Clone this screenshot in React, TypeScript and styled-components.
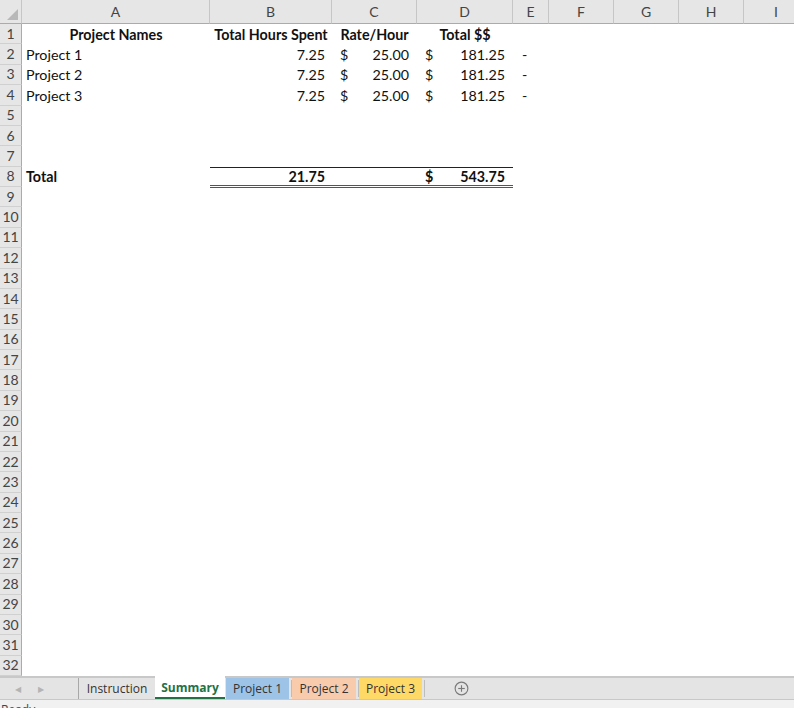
import React from 'react';
import styled, { createGlobalStyle, css } from 'styled-components';

const GlobalStyle = createGlobalStyle`
    html, body {
        margin: 0;
        padding: 0;
        background: #ffffff;
        overflow: hidden;
    }
    body {
        font-family: Lato, "Liberation Sans", sans-serif;
    }
`;

const ROW_H = 20.375;
const COLS = ['A', 'B', 'C', 'D', 'E', 'F', 'G', 'H', 'I'];

const Window = styled.div`
    display: flex;
    flex-direction: column;
    width: 794px;
    height: 708px;
    overflow: hidden;
`;

const Sheet = styled.div`
    display: grid;
    grid-template-columns: 22px 188px 122px 85px 96px 36px 65px 65px 65px 65px;
    grid-template-rows: 24px repeat(32, ${ROW_H}px);
    background: #ffffff;
`;

const Corner = styled.div`
    position: relative;
    background: #e6e6e6;
    border-right: 1px solid #c6c6c6;
    border-bottom: 1px solid #ababab;
    &::after {
        content: '';
        position: absolute;
        right: 3px;
        bottom: 3px;
        width: 0;
        height: 0;
        border-left: 11px solid transparent;
        border-bottom: 11px solid #b8b8b8;
    }
`;

const ColHead = styled.div`
    display: flex;
    align-items: center;
    justify-content: center;
    background: #e6e6e6;
    border-right: 1px solid #c6c6c6;
    border-bottom: 1px solid #ababab;
    color: #444444;
    font-size: 14px;
`;

const RowHead = styled.div`
    display: flex;
    align-items: center;
    justify-content: center;
    background: #e6e6e6;
    border-right: 1px solid #ababab;
    border-bottom: 1px solid #d0d0d0;
    color: #444444;
    font-size: 14px;
    line-height: 1;
`;

const Cell = styled.div<{ $align?: 'left' | 'center' | 'right'; $bold?: boolean; $rules?: boolean }>`
    display: flex;
    align-items: center;
    justify-content: ${({ $align }) =>
        $align === 'center' ? 'center' : $align === 'right' ? 'flex-end' : 'flex-start'};
    padding: 0 4px;
    font-size: 14.3px;
    color: #111111;
    white-space: nowrap;
    font-weight: ${({ $bold }) => ($bold ? 700 : 400)};
    ${({ $rules }) =>
        $rules &&
        css`
            border-top: 1px solid #222222;
            border-bottom: 3px double #555555;
            margin-bottom: -1px;
        `}
`;

const NumCell = styled(Cell)`
    padding: 0 7px;
`;

const Acct = styled(Cell)`
    justify-content: space-between;
    padding: 0 8px;
`;

const Dash = styled(Cell)`
    padding-left: 9px;
`;

const Blank = styled.div``;

const TabBar = styled.div`
    display: flex;
    align-items: stretch;
    height: 24px;
    flex-shrink: 0;
    background: #e4e4e4;
    border-top: 2px solid #c8c8c8;
    border-bottom: 1px solid #c8c8c8;
    box-sizing: border-box;
    font-family: "Open Sans", "Noto Sans", sans-serif;
    font-size: 12px;
`;

const NavArrows = styled.div`
    display: flex;
    align-items: center;
    gap: 17px;
    width: 79px;
    padding-left: 15px;
    box-sizing: border-box;
    color: #b4b4b4;
    font-size: 8px;
    border-right: 1px solid #a8a8a8;
`;

const Tab = styled.div<{ $color?: string; $active?: boolean; $width: number; $gap: number }>`
    position: relative;
    display: flex;
    align-items: center;
    justify-content: center;
    box-sizing: border-box;
    width: ${({ $width }) => $width}px;
    margin-right: ${({ $gap }) => $gap}px;
    background: ${({ $color }) => $color || 'transparent'};
    color: ${({ $active }) => ($active ? '#217346' : '#333333')};
    font-weight: ${({ $active }) => ($active ? 700 : 400)};
    ${({ $active }) =>
        $active &&
        css`
            background: #ffffff;
            margin-top: -2px;
            padding-top: 2px;
            border-bottom: 2px solid #217346;
        `}
    &::after {
        content: '';
        position: absolute;
        right: ${({ $gap }) => -Math.ceil($gap / 2) - 1}px;
        top: 2px;
        bottom: 2px;
        width: 1px;
        background: #bdbdbd;
    }
`;

const AddButton = styled.div`
    display: flex;
    align-items: center;
    justify-content: center;
    width: 72px;
    color: #777777;
`;

const StatusBar = styled.div`
    flex: 1;
    background: #f1f1f1;
    padding: 2px 0 0 1px;
    font-family: "Open Sans", "Noto Sans", sans-serif;
    font-size: 12px;
    line-height: 16px;
    color: #444444;
`;

type Row = React.ReactNode[];

const rows: Record<number, Row> = {
    1: [
        <Cell key="a" $align="center" $bold>Project Names</Cell>,
        <Cell key="b" $align="center" $bold>Total Hours Spent</Cell>,
        <Cell key="c" $align="center" $bold>Rate/Hour</Cell>,
        <Cell key="d" $align="center" $bold>Total $$</Cell>,
    ],
    8: [
        <Cell key="a" $bold>Total</Cell>,
        <NumCell key="b" $align="right" $bold $rules>21.75</NumCell>,
        <Cell key="c" $rules />,
        <Acct key="d" $bold $rules><span>$</span><span>543.75</span></Acct>,
    ],
};

[2, 3, 4].forEach((n) => {
    rows[n] = [
        <Cell key="a">Project {n - 1}</Cell>,
        <NumCell key="b" $align="right">7.25</NumCell>,
        <Acct key="c"><span>$</span><span>25.00</span></Acct>,
        <Acct key="d"><span>$</span><span>181.25</span></Acct>,
        <Dash key="e">-</Dash>,
    ];
});

const PlusIcon = () => (
    <svg width="15" height="15" viewBox="0 0 16 16" fill="none" stroke="#7a7a7a" strokeWidth="1.2">
        <circle cx="8" cy="8" r="6.8" />
        <line x1="8" y1="4.5" x2="8" y2="11.5" />
        <line x1="4.5" y1="8" x2="11.5" y2="8" />
    </svg>
);

const tabs = [
    { name: 'Instruction', width: 76, gap: 0 },
    { name: 'Summary', width: 70, gap: 1, active: true },
    { name: 'Project 1', width: 63, gap: 3, color: '#9dc3e6' },
    { name: 'Project 2', width: 64, gap: 3, color: '#f8cbad' },
    { name: 'Project 3', width: 63, gap: 3, color: '#ffd966' },
];

const App = () => {
    const lines = Array.from({ length: 32 }, (_, i) => i + 1);
    return (
        <Window>
            <GlobalStyle />
            <Sheet>
                <Corner />
                {COLS.map((c) => (
                    <ColHead key={c}>{c}</ColHead>
                ))}
                {lines.map((n) => {
                    const cells = [...(rows[n] || [])];
                    while (cells.length < COLS.length) cells.push(<Blank key={`x${cells.length}`} />);
                    return (
                        <React.Fragment key={n}>
                            <RowHead>{n}</RowHead>
                            {cells}
                        </React.Fragment>
                    );
                })}
            </Sheet>
            <TabBar>
                <NavArrows>
                    <span>◀</span>
                    <span>▶</span>
                </NavArrows>
                {tabs.map((t) => (
                    <Tab key={t.name} $width={t.width} $gap={t.gap} $color={t.color} $active={t.active}>
                        {t.name}
                    </Tab>
                ))}
                <AddButton>
                    <PlusIcon />
                </AddButton>
            </TabBar>
            <StatusBar>Ready</StatusBar>
        </Window>
    );
};

export default App;
